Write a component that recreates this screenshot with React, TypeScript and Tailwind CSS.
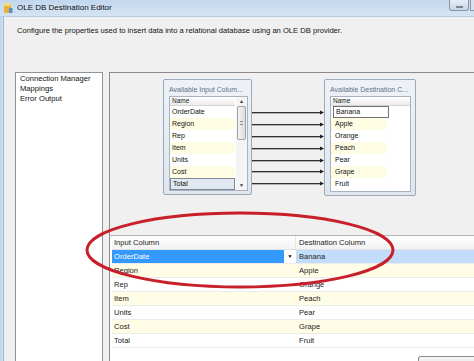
import React from 'react';

const font = "font-['Segoe_UI','Liberation_Sans',Arial,sans-serif]";

const inputCols = ['OrderDate', 'Region', 'Rep', 'Item', 'Units', 'Cost', 'Total'];
const destCols = ['Banana', 'Apple', 'Orange', 'Peach', 'Pear', 'Grape', 'Fruit'];

const mappings = [
  { input: 'OrderDate', dest: 'Banana' },
  { input: 'Region', dest: 'Apple' },
  { input: 'Rep', dest: 'Orange' },
  { input: 'Item', dest: 'Peach' },
  { input: 'Units', dest: 'Pear' },
  { input: 'Cost', dest: 'Grape' },
  { input: 'Total', dest: 'Fruit' },
];

function AppIcon() {
  return (
    <svg width="10" height="12" viewBox="0 0 10 12">
      <rect x="1" y="2" width="7" height="9" rx="1" fill="#e8b23a" />
      <ellipse cx="4.5" cy="2.5" rx="3.5" ry="1.5" fill="#f7d97a" />
      <rect x="6" y="6" width="3.5" height="5" fill="#5b8fd0" />
    </svg>
  );
}

function ListHeader({ label }: { label: string }) {
  return (
    <div className="h-[9px] flex items-center pl-[2px] text-[6.5px] text-[#222] bg-gradient-to-b from-white to-[#ececec] border-b border-[#d5d5d5]">
      {label}
    </div>
  );
}

function InputBox() {
  return (
    <div className="w-[89px] h-[116px] border border-[#9aaabd] rounded-[2px] bg-gradient-to-b from-[#eef2f7] to-[#dfe6ee] flex flex-col">
      <div className="h-[16px] pl-[5px] pt-[6px] text-[7px] leading-[8px] text-[#5d7189]">Available Input Colum...</div>
      <div className="ml-[5px] w-[79px] h-[95px] border border-[#a9b3c0] bg-white flex">
        <div className="w-[66px] flex flex-col">
          <ListHeader label="Name" />
          {inputCols.map((c, i) => (
            <div
              key={c}
              className={`h-[12px] flex items-center pl-[2px] text-[7px] text-[#111] ${
                i === 6
                  ? 'bg-[#e2e8ef] border border-[#7d8a99]'
                  : i % 2 === 1
                  ? 'bg-[#fefde3]'
                  : 'bg-white'
              }`}
            >
              {c}
            </div>
          ))}
        </div>
        <div className="w-[11px] ml-[1px] flex flex-col items-center bg-[#f4f4f4]">
          <div className="h-[9px] text-[5px] leading-[9px] text-[#333]">▲</div>
          <div className="w-[9px] h-[34px] rounded-[2px] border border-[#a3a3a3] bg-gradient-to-r from-[#f4f4f4] to-[#dcdcdc] flex items-center justify-center">
            <div className="w-[3px] h-[4px] border-y border-[#8a8a8a]" />
          </div>
          <div className="flex-1" />
          <div className="h-[9px] text-[5px] leading-[9px] text-[#333]">▼</div>
        </div>
      </div>
    </div>
  );
}

function DestBox() {
  return (
    <div className="w-[92px] h-[117px] border border-[#9aaabd] rounded-[2px] bg-gradient-to-b from-[#eef2f7] to-[#dfe6ee] flex flex-col">
      <div className="h-[16px] pl-[5px] pt-[6px] text-[7px] leading-[8px] text-[#5d7189]">Available Destination C...</div>
      <div className="ml-[5px] w-[81px] h-[96px] border border-[#a9b3c0] bg-white flex flex-col">
        <ListHeader label="Name" />
        {destCols.map((c, i) => (
          <div
            key={c}
            className={`w-[56px] h-[12px] flex items-center text-[7px] text-[#111] ${
              i === 0
                ? 'ml-[2px] w-[54px] pl-[2px] border border-[#707070]'
                : 'pl-[4px]'
            } ${i % 2 === 1 ? 'bg-[#fefde3]' : 'bg-white'}`}
          >
            {c}
          </div>
        ))}
      </div>
    </div>
  );
}

function Connectors() {
  const ys = [33, 45, 57, 69, 81, 92, 104];
  return (
    <svg width="72" height="117" viewBox="0 0 72 117" className="shrink-0">
      {ys.map((y) => (
        <g key={y}>
          <line x1="0" y1={y + 0.5} x2="70" y2={y + 0.5} stroke="#2f2f2f" strokeWidth="1" />
          <line x1="0" y1={y + 1.5} x2="70" y2={y + 1.5} stroke="#b0b0b0" strokeWidth="1" />
          <polygon points={`68,${y - 1.5} 72,${y + 0.5} 68,${y + 2.5}`} fill="#1f1f1f" />
        </g>
      ))}
    </svg>
  );
}

export default function App() {
  return (
    <div className={`relative w-[474px] h-[361px] overflow-hidden bg-[#f0f0f0] ${font}`}>
      {/* title bar */}
      <div className="h-[17px] flex items-center pl-[3px] bg-gradient-to-b from-[#c2d7ee] to-[#d5e4f3] border-b border-[#b8cbe0]">
        <AppIcon />
        <span className="ml-[4px] text-[8px] text-[#111]">OLE DB Destination Editor</span>
        <div className="flex-1" />
        <div className="self-start w-[20px] h-[11px] rounded-b-[3px] border border-t-0 border-[#8796a8] bg-gradient-to-b from-[#e6edf5] to-[#c9d5e3] flex items-end justify-center pb-[2px]">
          <div className="w-[7px] h-[2px] bg-[#f8f8f8] border border-[#7b8796]" />
        </div>
        <div className="self-start w-[4px] h-[11px] ml-px border border-t-0 border-r-0 border-[#8796a8] bg-[#d8e2ee]" />
      </div>

      <div className="flex h-[344px]">
        {/* window frame */}
        <div className="w-[4px] bg-gradient-to-r from-[#bcd2ea] to-[#d7e5f3] border-r border-[#9fb3ca]" />

        <div className="flex-1 flex flex-col">
          <div className="pt-[9px] pl-[13px] text-[7.6px] leading-[10px] text-[#111]">
            Configure the properties used to insert data into a relational database using an OLE DB provider.
          </div>

          <div className="mt-[36px] flex flex-1 pl-[11px]">
            {/* navigation */}
            <div className="w-[88px] border border-b-0 border-[#8e9399] bg-white pt-[1px] pl-[4px] text-[7.6px] leading-[10px] text-[#111]">
              <div>Connection Manager</div>
              <div>Mappings</div>
              <div>Error Output</div>
            </div>

            {/* mappings panel */}
            <div className="ml-[6px] flex-1 flex flex-col border-l border-t border-[#8b8b8b]">
              <div className="h-[162px] flex pl-[53px] pt-[6px]">
                <InputBox />
                <Connectors />
                <DestBox />
              </div>

              <div className="flex-1 border-t border-[#b4b4b4] bg-white pl-[2px] relative">
                <div className="flex h-[14px] bg-gradient-to-b from-white to-[#f3f3f3] border-b border-[#e2e2e2] text-[7.6px] text-[#222]">
                  <div className="w-[184px] pl-[2px] flex items-center border-r border-[#e6e6e6]">Input Column</div>
                  <div className="flex-1 pl-[3px] flex items-center">Destination Column</div>
                </div>
                {mappings.map((m, i) => (
                  <div
                    key={m.input}
                    className={`flex h-[14px] border-b border-[#ececec] text-[7.6px] text-[#222] ${
                      i % 2 === 1 ? 'bg-[#fffde6]' : 'bg-white'
                    }`}
                  >
                    {i === 0 ? (
                      <>
                        <div className="w-[172px] pl-[2px] flex items-center bg-[#3399ff] text-white">{m.input}</div>
                        <div className="w-[12px] flex items-center justify-center bg-white text-[5px] text-black">▼</div>
                        <div className="flex-1 pl-[3px] flex items-center bg-[#c2ddfa]">{m.dest}</div>
                      </>
                    ) : (
                      <>
                        <div className="w-[184px] pl-[2px] flex items-center">{m.input}</div>
                        <div className="flex-1 pl-[3px] flex items-center">{m.dest}</div>
                      </>
                    )}
                  </div>
                ))}
                <div className="flex justify-end pr-0 pt-[8px]">
                  <div className="w-[70px] h-[10px] rounded-t-[3px] border border-b-0 border-[#8a8a8a] bg-gradient-to-b from-[#f6f6f6] to-[#e6e6e6] -mr-[14px]" />
                </div>
              </div>
            </div>
          </div>
        </div>
      </div>

      {/* red ellipse annotation */}
      <svg className="absolute inset-0 pointer-events-none" width="474" height="361" viewBox="0 0 474 361">
        <ellipse cx="240" cy="250" rx="153" ry="37" fill="none" stroke="#c8202b" strokeWidth="3" />
      </svg>
    </div>
  );
}
